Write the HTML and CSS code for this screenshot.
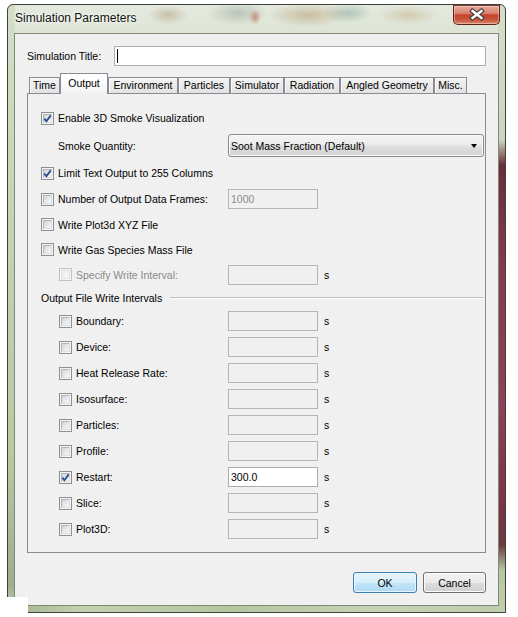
FILE: index.html
```html
<!DOCTYPE html>
<html>
<head>
<meta charset="utf-8">
<title>Simulation Parameters</title>
<link rel="stylesheet" href="styles.css">
</head>
<body>
<div class="window">
  <div class="titlebar">
    <span class="title">Simulation Parameters</span>
    <div class="close">
      <svg width="47" height="20" viewBox="0 0 47 20">
        <path d="M19.5 6 L28.5 13 M28.5 6 L19.5 13" stroke="#3a3a3a" stroke-width="4.6" stroke-linecap="square" fill="none"/>
        <path d="M19.5 6 L28.5 13 M28.5 6 L19.5 13" stroke="#ffffff" stroke-width="2.4" stroke-linecap="square" fill="none"/>
      </svg>
    </div>
  </div>
  <div class="client">
    <div class="title-row">
      <span class="title-label">Simulation Title:</span>
      <div class="field title-field"><span class="caret"></span></div>
    </div>
    <div class="tabs">
      <div class="tab w-time">Time</div>
      <div class="tab sel w-output">Output</div>
      <div class="tab w-env">Environment</div>
      <div class="tab w-part">Particles</div>
      <div class="tab w-sim">Simulator</div>
      <div class="tab w-rad">Radiation</div>
      <div class="tab w-ang">Angled Geometry</div>
      <div class="tab w-misc">Misc.</div>
    </div>
    <div class="panel">
      <div class="row h26">
        <span class="opt"><span class="cb on"><svg class="tick" width="11" height="11" viewBox="0 0 11 11"><path d="M2.3 5.6 L4.4 8.2 L8.8 2.4" stroke="#30508e" stroke-width="1.9" fill="none"/></svg></span>Enable 3D Smoke Visualization</span>
      </div>
      <div class="row h29">
        <span class="lab">Smoke Quantity:</span>
        <div class="combo"><span>Soot Mass Fraction (Default)</span><span class="arrow"></span></div>
      </div>
      <div class="row h26">
        <span class="opt"><span class="cb on"><svg class="tick" width="11" height="11" viewBox="0 0 11 11"><path d="M2.3 5.6 L4.4 8.2 L8.8 2.4" stroke="#30508e" stroke-width="1.9" fill="none"/></svg></span>Limit Text Output to 255 Columns</span>
      </div>
      <div class="row h26">
        <span class="opt"><span class="cb"></span>Number of Output Data Frames:</span>
        <div class="field small off">1000</div>
      </div>
      <div class="row h25">
        <span class="opt"><span class="cb"></span>Write Plot3d XYZ File</span>
      </div>
      <div class="row h25">
        <span class="opt"><span class="cb"></span>Write Gas Species Mass File</span>
      </div>
      <div class="row h25">
        <span class="opt sub dis"><span class="cb"></span>Specify Write Interval:</span>
        <div class="field small off"></div><span class="unit">s</span>
      </div>
      <div class="row h21">
        <span class="group-title">Output File Write Intervals</span><span class="sep"></span>
      </div>
      <div class="row h26">
        <span class="opt sub"><span class="cb"></span>Boundary:</span>
        <div class="field small off"></div><span class="unit">s</span>
      </div>
      <div class="row h26">
        <span class="opt sub"><span class="cb"></span>Device:</span>
        <div class="field small off"></div><span class="unit">s</span>
      </div>
      <div class="row h26">
        <span class="opt sub"><span class="cb"></span>Heat Release Rate:</span>
        <div class="field small off"></div><span class="unit">s</span>
      </div>
      <div class="row h26">
        <span class="opt sub"><span class="cb"></span>Isosurface:</span>
        <div class="field small off"></div><span class="unit">s</span>
      </div>
      <div class="row h26">
        <span class="opt sub"><span class="cb"></span>Particles:</span>
        <div class="field small off"></div><span class="unit">s</span>
      </div>
      <div class="row h26">
        <span class="opt sub"><span class="cb"></span>Profile:</span>
        <div class="field small off"></div><span class="unit">s</span>
      </div>
      <div class="row h26">
        <span class="opt sub"><span class="cb on"><svg class="tick" width="11" height="11" viewBox="0 0 11 11"><path d="M2.3 5.6 L4.4 8.2 L8.8 2.4" stroke="#30508e" stroke-width="1.9" fill="none"/></svg></span>Restart:</span>
        <div class="field small">300.0</div><span class="unit">s</span>
      </div>
      <div class="row h26">
        <span class="opt sub"><span class="cb"></span>Slice:</span>
        <div class="field small off"></div><span class="unit">s</span>
      </div>
      <div class="row h26">
        <span class="opt sub"><span class="cb"></span>Plot3D:</span>
        <div class="field small off"></div><span class="unit">s</span>
      </div>
    </div>
    <div class="buttons">
      <div class="btn ok">OK</div>
      <div class="btn cancel">Cancel</div>
    </div>
  </div>
</div>
<div class="corner-patch"></div>
</body>
</html>
```
FILE: styles.css
```css
* { box-sizing: border-box; }
html, body { margin: 0; padding: 0; background: #ffffff; }
body {
  width: 518px;
  height: 617px;
  overflow: hidden;
  position: relative;
  font-family: "Liberation Sans", Arial, sans-serif;
  font-size: 10.5px;
  color: #000;
}

.window {
  margin: 4px 0 0 7px;
  width: 499px;
  height: 609px;
  border: 1px solid #3b4236;
  border-radius: 6px 6px 0 0;
  padding: 0 6px 6px 6px;
  display: flex;
  flex-direction: column;
  background:
    linear-gradient(to bottom, #d6ddcc 0px, #cbd5be 135px, #6a2d3c 160px, #86394f 260px, #8f405a 400px, #7c3347 500px, #6d3a42 540px, #b5c4a1 565px, #c3d0b0 609px) right top / 7px 100% no-repeat,
    linear-gradient(to bottom, #d4ddc8 0px, #c2d1ae 250px, #b9c9a4 450px, #9eae8b 580px, #c5d2b3 609px) left top / 7px 100% no-repeat,
    linear-gradient(to right, #a2b28e 0%, #c3d1ae 15%, #b6c6a1 45%, #c7d3b6 75%, #bfcbae 100%) left bottom / 100% 7px no-repeat,
    radial-gradient(ellipse 20px 10px at 160px 10px, rgba(150,120,80,0.35), rgba(150,120,80,0) 100%),
    radial-gradient(ellipse 30px 12px at 230px 8px, rgba(110,130,120,0.35), rgba(110,130,120,0) 100%),
    radial-gradient(ellipse 6px 8px at 247px 12px, rgba(190,80,50,0.55), rgba(190,80,50,0) 100%),
    radial-gradient(ellipse 40px 12px at 300px 10px, rgba(170,140,90,0.45), rgba(170,140,90,0) 100%),
    radial-gradient(ellipse 25px 10px at 340px 8px, rgba(90,130,130,0.35), rgba(90,130,130,0) 100%),
    radial-gradient(ellipse 30px 10px at 400px 10px, rgba(180,150,100,0.35), rgba(180,150,100,0) 100%),
    linear-gradient(to bottom, #e4e9de 0px, #dde4d4 30px, #d6dfcb 100%);
}

.titlebar {
  height: 28px;
  flex: none;
  display: flex;
  justify-content: space-between;
  align-items: flex-start;
}
.title {
  font-size: 12px;
  line-height: 14px;
  padding: 6px 0 0 1px;
  color: #111;
  text-shadow: 0 0 6px rgba(255,255,255,0.95), 0 0 3px rgba(255,255,255,0.9);
}
.close {
  width: 47px;
  height: 20px;
  margin-right: -1px;
  border: 1px solid #5e2319;
  border-top-color: #7a3a30;
  border-radius: 0 0 5px 5px;
  background: linear-gradient(to bottom, #e7a899 0%, #d98471 40%, #c4462c 50%, #c8533a 75%, #dc8a6c 100%);
  box-shadow: inset 0 0 0 1px rgba(255,255,255,0.35);
  position: relative;
}
.close svg { position: absolute; left: -1px; top: -1px; }

.client {
  flex: 1;
  background: #f0f0f0;
  border: 1px solid #7e8a75;
  padding: 12px 12px 0 12px;
  display: flex;
  flex-direction: column;
}

.title-row {
  display: flex;
  align-items: center;
  height: 20px;
  flex: none;
}
.title-label { width: 87px; flex: none; }
.field {
  height: 20px;
  border: 1px solid #abadb3;
  background: #fff;
  padding-left: 2px;
  display: flex;
  align-items: center;
  line-height: 12px;
}
.title-field { flex: 1; margin-right: 0; }
.caret { width: 1px; height: 14px; background: #000; }

.tabs {
  margin-top: 7px;
  height: 21px;
  flex: none;
  display: flex;
  align-items: flex-end;
  padding-left: 2px;
  margin-bottom: -1px;
  position: relative;
  z-index: 2;
}
.tab {
  height: 17px;
  border: 1px solid #898c95;
  background: linear-gradient(to bottom, #f3f3f3 0%, #ebebeb 50%, #e2e2e2 100%);
  box-shadow: inset 1px 1px 0 #fbfbfb;
  text-align: center;
  line-height: 15px;
  white-space: nowrap;
}
.tab.sel {
  height: 21px;
  border-bottom: none;
  background: linear-gradient(to bottom, #ffffff 0%, #fafafa 60%, #f0f0f0 100%);
  box-shadow: none;
  line-height: 17px;
  padding-top: 1px;
}
.w-time { width: 31px; }
.w-output { width: 48px; }
.w-env { width: 70px; }
.w-part { width: 52px; }
.w-sim { width: 54px; }
.w-rad { width: 56px; }
.w-ang { width: 94px; }
.w-misc { width: 33px; }

.panel {
  height: 460px;
  flex: none;
  border: 1px solid #898c95;
  background: #f0f0f0;
  padding: 11px 1px 0 13px;
  display: flex;
  flex-direction: column;
}
.row { display: flex; align-items: center; flex: none; }
.h21 { height: 21px; }
.h25 { height: 25px; }
.h26 { height: 26px; }
.h29 { height: 29px; }

.opt {
  width: 187px;
  flex: none;
  display: flex;
  align-items: center;
  gap: 4px;
  white-space: nowrap;
}
.opt.sub { width: 169px; margin-left: 18px; }
.opt.dis { color: #8a8a8a; }
.lab { width: 187px; padding-left: 17px; flex: none; }

.cb {
  width: 13px;
  height: 13px;
  flex: none;
  border: 1px solid #8e8f8f;
  background: #f4f4f4;
  position: relative;
}
.cb::before {
  content: "";
  position: absolute;
  left: 1px; top: 1px; right: 1px; bottom: 1px;
  border: 1px solid #b3b6bb;
  border-right-color: #dcdfe2;
  border-bottom-color: #dcdfe2;
  background: linear-gradient(135deg, #cfd2d7 0%, #e6e7e9 50%, #f8f8f8 100%);
}
.dis .cb { border-color: #c2c3c4; background: #f6f6f6; }
.dis .cb::before { border-color: #e0e0e0; background: linear-gradient(135deg, #ececec, #f8f8f8); }
.tick { position: absolute; left: 0; top: 0; }

.combo {
  width: 256px;
  height: 23px;
  border: 1px solid #8a8a8a;
  border-radius: 3px;
  background: linear-gradient(to bottom, #f4f4f4 0%, #ececec 45%, #dedede 55%, #d3d3d3 100%);
  box-shadow: inset 0 0 0 1px #fafafa;
  display: flex;
  align-items: center;
  justify-content: space-between;
  padding: 0 6px 0 2px;
}
.arrow {
  width: 0; height: 0;
  border-left: 3.5px solid transparent;
  border-right: 3.5px solid transparent;
  border-top: 4px solid #000;
}

.field.small { width: 90px; flex: none; }
.field.off { background: #f0f0f0; border-color: #b5b5b5; color: #8c8c8c; }
.unit { margin-left: 6px; }

.group-title { white-space: nowrap; }
.sep {
  flex: 1;
  margin-left: 8px;
  height: 2px;
  border-top: 1px solid #bdbdbd;
  border-bottom: 1px solid #ffffff;
}

.buttons {
  margin-top: 19px;
  display: flex;
  justify-content: flex-end;
  gap: 6px;
  flex: none;
}
.btn {
  height: 21px;
  border: 1px solid #707070;
  border-radius: 3px;
  background: linear-gradient(to bottom, #f2f2f2 0%, #ebebeb 50%, #dddddd 51%, #cfcfcf 100%);
  box-shadow: inset 0 0 0 1px #fcfcfc;
  display: flex;
  align-items: center;
  justify-content: center;
}
.ok {
  width: 64px;
  border-color: #3c7fb1;
  background: linear-gradient(to bottom, #e5f4fc 0%, #d6eefb 50%, #c2e5f9 51%, #add9f3 100%);
  box-shadow: inset 0 0 0 1px #e9f6fd;
}
.cancel { width: 63px; }

.corner-patch {
  position: absolute;
  left: 0;
  top: 597px;
  width: 28px;
  height: 20px;
  background: #ffffff;
}
```
